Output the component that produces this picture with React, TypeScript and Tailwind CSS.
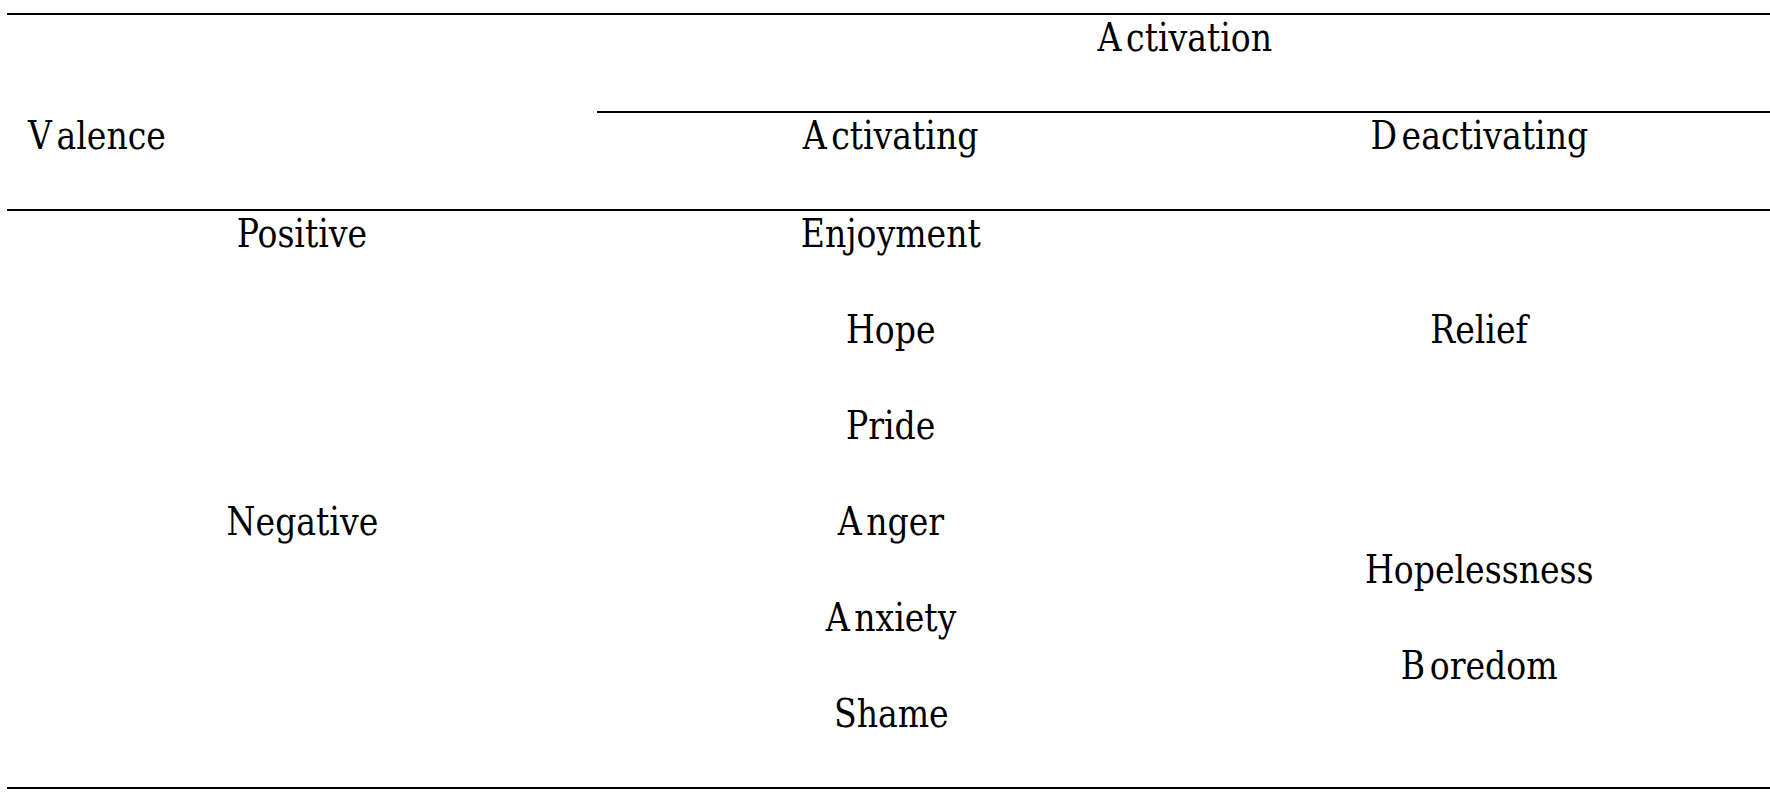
const serif = "font-['DejaVu_Serif_Condensed','DejaVu_Serif',serif] [font-stretch:condensed]";

function Line({ children, left }: { children: React.ReactNode; left?: boolean }) {
  return (
    <p className="h-[96px] text-[40px] leading-[44px]">
      <span className={`inline-block scale-x-[0.92] ${left ? "origin-left" : "origin-center"}`}>{children}</span>
    </p>
  );
}

// the source PDF leaves a small gap after some capitals
const Cap = ({ c }: { c: string }) => <span className="mr-[5px]">{c}</span>;

export default function App() {
  return (
    <div className={`w-[1770px] h-[792px] overflow-hidden bg-white text-black ${serif}`}>
      <div className="ml-[7px] mt-[13px] w-[1766px] border-t-2 border-b-2 border-black">
        {/* header */}
        <div className="grid grid-cols-[590px_588px_588px]">
          <div />
          <div className="col-span-2 border-b-2 border-black text-center">
            <Line>
              <Cap c="A" />ctivation
            </Line>
          </div>
        </div>
        <div className="grid grid-cols-[590px_588px_588px] border-b-2 border-black">
          <div className="pl-[21px]">
            <Line left>
              <Cap c="V" />alence
            </Line>
          </div>
          <div className="text-center">
            <Line>
              <Cap c="A" />ctivating
            </Line>
          </div>
          <div className="text-center">
            <Line>
              <Cap c="D" />eactivating
            </Line>
          </div>
        </div>

        {/* body */}
        <div className="grid grid-cols-[590px_588px_588px] text-center">
          <div>
            <Line>Positive</Line>
          </div>
          <div>
            <Line>Enjoyment</Line>
            <Line>Hope</Line>
            <Line>Pride</Line>
          </div>
          <div className="flex flex-col justify-center">
            <Line>Relief</Line>
          </div>
        </div>
        <div className="grid grid-cols-[590px_588px_588px] text-center">
          <div>
            <Line>Negative</Line>
          </div>
          <div>
            <Line>
              <Cap c="A" />nger
            </Line>
            <Line>
              <Cap c="A" />nxiety
            </Line>
            <Line>Shame</Line>
          </div>
          <div className="flex flex-col justify-center">
            <Line>Hopelessness</Line>
            <Line>
              <Cap c="B" />oredom
            </Line>
          </div>
        </div>
      </div>
    </div>
  );
}
